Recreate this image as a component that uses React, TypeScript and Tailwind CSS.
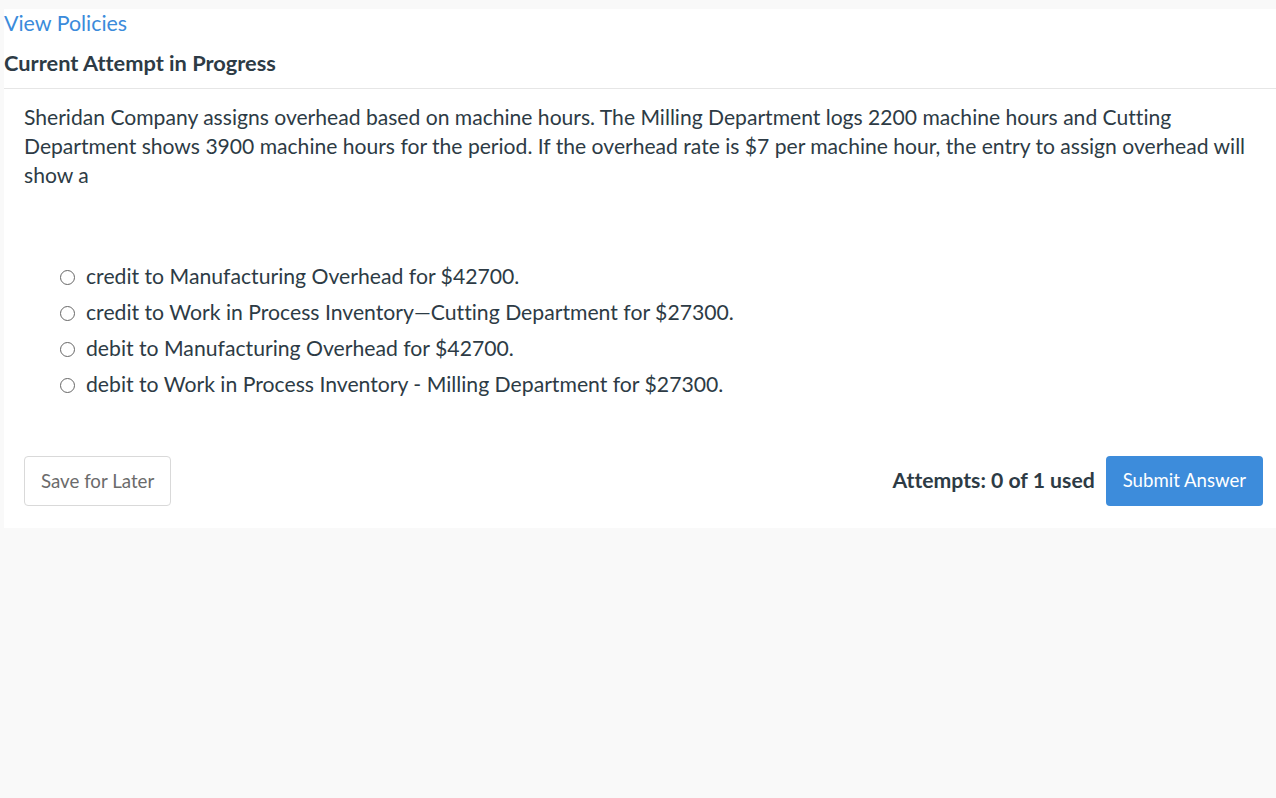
import React from "react";

const options = [
  "credit to Manufacturing Overhead for $42700.",
  "credit to Work in Process Inventory\u2014Cutting Department for $27300.",
  "debit to Manufacturing Overhead for $42700.",
  "debit to Work in Process Inventory - Milling Department for $27300.",
];

export default function App() {
  return (
    <div
      className="min-h-[798px] bg-[#f9f9f9] pt-[9px] pl-[4px] [font-variant-ligatures:none]"
      style={{ fontFamily: "Lato, 'Open Sans', sans-serif" }}
    >
      <div className="bg-white text-[#2d3b45]">
        <div className="h-[28px] text-[21.4px] leading-[28px] text-[#3b8bdb]">View Policies</div>
        <div className="mt-[12px] h-[28px] text-[21.8px] font-bold leading-[28px]">Current Attempt in Progress</div>
        <div className="mt-[11px] h-px bg-[#e6e6e6]" />
        <div className="pl-[20px] pr-[13px] pt-[13px] pb-[22px]">
          <p className="pr-[7px] text-[21.1px] leading-[29px]">
            Sheridan Company assigns overhead based on machine hours. The Milling Department logs 2200 machine hours and Cutting
            Department shows 3900 machine hours for the period. If the overhead rate is $7 per machine hour, the entry to assign
            overhead will show a
          </p>
          <div className="mt-[70px] flex flex-col pl-[36px]">
            {options.map((o) => (
              <label key={o} className="flex h-[36px] items-center gap-[11px] text-[21.2px]">
                <span className="h-[15px] w-[15px] shrink-0 rounded-full border border-[#666] bg-white" />
                <span>{o}</span>
              </label>
            ))}
          </div>
          <div className="mt-[53px] flex items-center">
            <button className="h-[50px] rounded-[4px] border border-[#d9d9d9] bg-white px-[16px] text-[18.7px] text-[#6b6b6b]">
              Save for Later
            </button>
            <div className="ml-auto flex items-center gap-[11px]">
              <span className="text-[21.2px] font-bold">Attempts: 0 of 1 used</span>
              <button className="h-[50px] rounded-[4px] bg-[#3d8cdb] px-[17px] text-[18.6px] text-white">
                Submit Answer
              </button>
            </div>
          </div>
        </div>
      </div>
    </div>
  );
}
